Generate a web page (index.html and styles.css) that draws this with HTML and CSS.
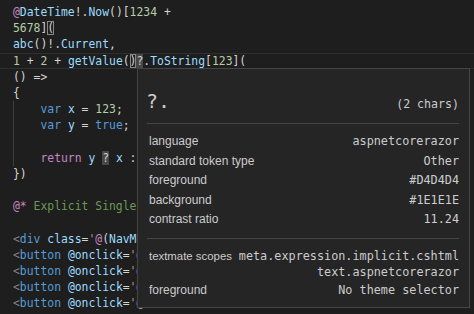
FILE: index.html
```html
<!DOCTYPE html>
<html>
<head>
<meta charset="utf-8">
<link rel="stylesheet" href="styles.css">
</head>
<body>
<div class="editor">
  <div class="line"><span class="t">@</span><span class="v">DateTime</span>!.<span class="v">Now</span>()[<span class="n">1234</span> +</div>
  <div class="line"><span class="n">5678</span>]<span class="bm">(</span></div>
  <div class="line"><span class="v">abc</span>()!.<span class="v">Current</span>,</div>
  <div class="line cur"><span class="n">1</span> + <span class="n">2</span> + <span class="v">getValue</span>(<span class="bm">)</span><span class="hl">?</span>.<span class="v">ToString</span>[<span class="n">123</span>](</div>
  <div class="line">() =&gt;</div>
  <div class="line">{</div>
  <div class="guide">
    <div class="gline">    <span class="k">var</span> <span class="v">x</span> = <span class="n">123</span>;</div>
    <div class="gline">    <span class="k">var</span> <span class="v">y</span> = <span class="k">true</span>;</div>
    <div class="gline"> </div>
    <div class="gline">    <span class="t">return</span> <span class="v">y</span> <span class="hl">?</span> <span class="v">x</span> :</div>
  </div>
  <div class="line">})</div>
  <div class="line"> </div>
  <div class="line"><span class="t">@*</span><span class="c"> Explicit Single</span></div>
  <div class="line"> </div>
  <div class="line"><span class="g">&lt;</span><span class="k">div</span> <span class="v">class</span>=<span class="s">'</span><span class="t">@</span>(<span class="v">NavMe</span></div>
  <div class="line"><span class="g">&lt;</span><span class="k">button</span> <span class="v">@onclick</span>=<span class="s">'</span><span class="t">@</span></div>
  <div class="line"><span class="g">&lt;</span><span class="k">button</span> <span class="v">@onclick</span>=<span class="s">'</span><span class="t">@</span></div>
  <div class="line"><span class="g">&lt;</span><span class="k">button</span> <span class="v">@onclick</span>=<span class="s">'</span><span class="t">@</span></div>
  <div class="line"><span class="g">&lt;</span><span class="k">button</span> <span class="v">@onclick</span>=<span class="s">'</span><span class="t">@</span></div>
</div>

<div class="hover">
  <div class="head">
    <span class="tok">?.</span>
    <span class="chars">(2 chars)</span>
  </div>
  <div class="sep"></div>
  <div class="rows">
    <div class="row"><span class="lbl">language</span><span class="val">aspnetcorerazor</span></div>
    <div class="row"><span class="lbl">standard token type</span><span class="val">Other</span></div>
    <div class="row"><span class="lbl">foreground</span><span class="val">#D4D4D4</span></div>
    <div class="row"><span class="lbl">background</span><span class="val">#1E1E1E</span></div>
    <div class="row"><span class="lbl">contrast ratio</span><span class="val">11.24</span></div>
  </div>
  <div class="sep"></div>
  <div class="rows rows2">
    <div class="row scopes"><span class="lbl small">textmate scopes</span><span class="val">meta.expression.implicit.cshtml<br>text.aspnetcorerazor</span></div>
    <div class="row"><span class="lbl">foreground</span><span class="val">No theme selector</span></div>
  </div>
</div>
</body>
</html>
```
FILE: styles.css
```css
html, body {
  margin: 0;
  padding: 0;
}
body {
  width: 474px;
  height: 314px;
  overflow: hidden;
  position: relative;
  background: #1e1e1e;
  font-family: "DejaVu Sans Mono", monospace;
}
.editor {
  padding-top: 4px;
  font-size: 11.4px;
  line-height: 16.2px;
  color: #d4d4d4;
}
.line {
  height: 16.2px;
  padding-left: 13px;
  white-space: pre;
}
.cur {
  box-shadow: inset 0 1px #2f2f2f, inset 0 -1px #2f2f2f;
}
.guide {
  margin-left: 13px;
  box-shadow: inset 1px 0 #3e3e3e;
}
.gline {
  height: 16.2px;
  white-space: pre;
}
.k { color: #569cd6; }
.v { color: #9cdcfe; }
.n { color: #b5cea8; }
.t { color: #c586c0; }
.c { color: #6a9955; }
.s { color: #ce9178; }
.g { color: #808080; }
.bm { box-shadow: inset 0 0 0 1px #888888; }
.hl { background: #484848; }

.hover {
  position: absolute;
  left: 137px;
  top: 68px;
  width: 333px;
  height: 240px;
  box-sizing: border-box;
  background: #252526;
  border: 1px solid #454545;
  padding: 0 10px 0 11px;
  color: #cccccc;
  font-family: "Liberation Sans", Arial, sans-serif;
  font-size: 12px;
}
.head {
  height: 54px;
  box-sizing: border-box;
  padding-top: 20px;
  display: flex;
  justify-content: space-between;
  align-items: baseline;
}
.tok {
  margin-left: -3px;
  font-family: "DejaVu Sans Mono", monospace;
  font-size: 20px;
  line-height: 24px;
}
.chars {
  font-family: "DejaVu Sans Mono", monospace;
  font-size: 11.6px;
}
.sep {
  height: 1px;
  background: #454545;
  margin-left: -2px;
}
.rows {
  padding: 8px 0;
}
.rows2 {
  padding-top: 9px;
}
.row {
  display: flex;
  justify-content: space-between;
  align-items: baseline;
  line-height: 19.5px;
}
.scopes {
  line-height: 16px;
  margin-bottom: 1px;
}
.small {
  font-size: 11.4px;
}
.val {
  font-family: "DejaVu Sans Mono", monospace;
  font-size: 11.8px;
  text-align: right;
}
```
